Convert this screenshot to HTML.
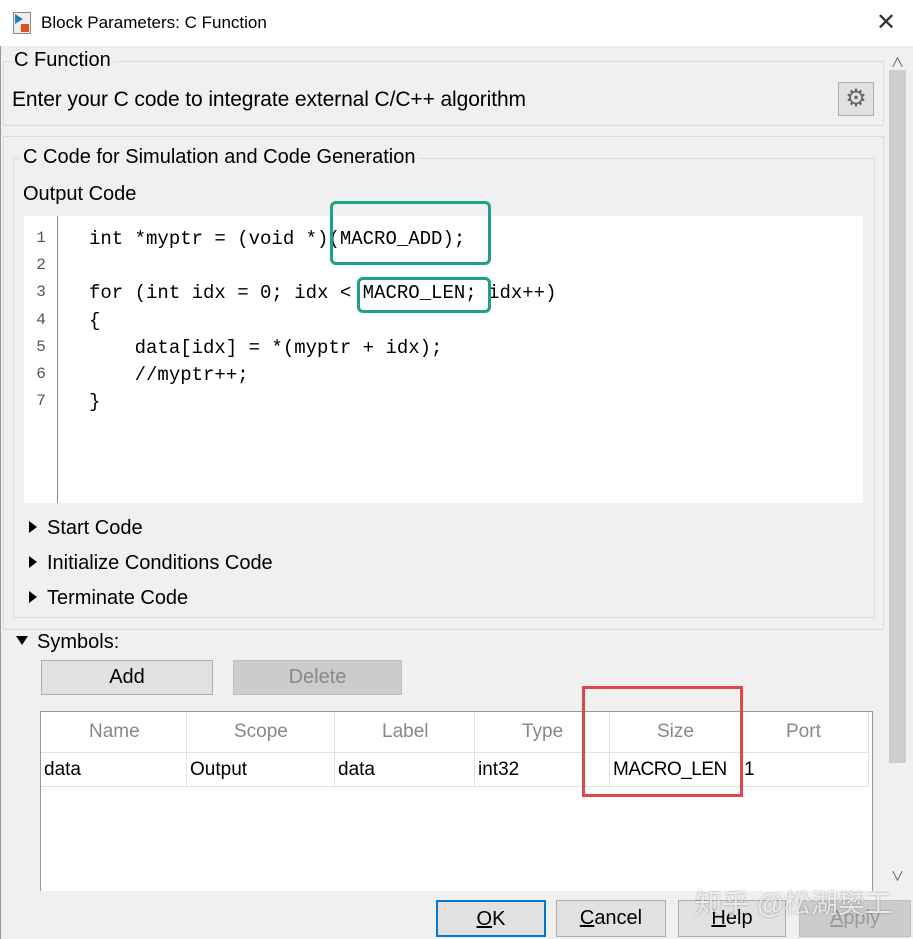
<!DOCTYPE html>
<html><head><meta charset="utf-8"><style>
*{margin:0;padding:0;box-sizing:border-box}
body{width:913px;height:939px;background:#f0f0f0;font-family:"Liberation Sans","Noto Sans CJK SC",sans-serif;position:relative;overflow:hidden;color:#000}
.a{position:absolute}
.t{font-size:20px;white-space:nowrap}
.mono{font-family:"Liberation Mono",monospace;font-size:19px;white-space:pre;position:absolute}
.ln{position:absolute;left:33px;width:16px;text-align:center;font-family:"Liberation Mono",monospace;font-size:16px;color:#555}
.btn{position:absolute;border:1px solid #adadad;background:#e1e1e1;font-size:19px;text-align:center}
.th{position:absolute;top:721px;font-size:19px;color:#888}
.td{position:absolute;top:759px;font-size:19px}
.vl{position:absolute;width:1px;background:#e2e2e2}
.tri{display:inline-block;width:0;height:0;border-left:8px solid #000;border-top:6px solid transparent;border-bottom:6px solid transparent;margin-right:10px;vertical-align:1px}
</style></head><body>
<div class="a" style="left:0;top:0;width:913px;height:46px;background:#fff"></div>
<div class="a" style="left:13px;top:12px;width:18px;height:22px;border:1px solid #888;background:#eee"></div>
<div class="a" style="left:15px;top:14px;width:0;height:0;border-left:8px solid #2a7ab8;border-top:5px solid transparent;border-bottom:5px solid transparent"></div>
<div class="a" style="left:21px;top:24px;width:8px;height:8px;background:#d9531e"></div>
<div class="a t" style="left:41px;top:13px;font-size:17px">Block Parameters: C Function</div>
<div class="a" style="left:876px;top:8px;font-size:24px;color:#333;font-weight:300">✕</div>
<div class="a" style="left:0;top:46px;width:1px;height:893px;background:#999"></div>
<div class="a" style="left:887px;top:48px;width:20px;height:840px;background:#f0f0f0"></div>
<div class="a" style="left:889px;top:70px;width:17px;height:693px;background:#cdcdcd"></div>
<div class="a" style="left:891px;top:52px;font-size:13px;color:#555">∧</div>
<div class="a" style="left:891px;top:866px;font-size:13px;color:#555">∨</div>
<div class="a" style="left:3px;top:61px;width:881px;height:65px;border:1px solid #dcdcdc"></div>
<div class="a t" style="left:11px;top:49px;background:#f0f0f0;padding:0 3px;">C Function</div>
<div class="a t" style="left:12px;top:88px;font-size:21px;letter-spacing:-0.1px">Enter your C code to integrate external C/C++ algorithm</div>
<div class="a" style="left:838px;top:82px;width:36px;height:34px;border:1px solid #adadad;background:#e1e1e1;text-align:center;font-size:24px;line-height:32px;color:#666">⚙</div>
<div class="a" style="left:3px;top:136px;width:881px;height:494px;border:1px solid #dcdcdc"></div>
<div class="a" style="left:13px;top:158px;width:862px;height:460px;border:1px solid #dcdcdc"></div>
<div class="a t" style="left:20px;top:146px;background:#f0f0f0;padding:0 3px">C Code for Simulation and Code Generation</div>
<div class="a t" style="left:23px;top:183px">Output Code</div>
<div class="a" style="left:24px;top:216px;width:839px;height:287px;background:#fff"></div>
<div class="a" style="left:57px;top:216px;width:1px;height:287px;background:#888"></div>
<div class="ln" style="top:229px">1</div><div class="ln" style="top:256px">2</div><div class="ln" style="top:283px">3</div><div class="ln" style="top:311px">4</div><div class="ln" style="top:338px">5</div><div class="ln" style="top:365px">6</div><div class="ln" style="top:392px">7</div>
<div class="mono" style="left:89px;top:228px">int *myptr = (void *)(MACRO_ADD);</div>
<div class="mono" style="left:89px;top:282px">for (int idx = 0; idx &lt; MACRO_LEN; idx++)</div>
<div class="mono" style="left:89px;top:310px">{</div>
<div class="mono" style="left:89px;top:337px">    data[idx] = *(myptr + idx);</div>
<div class="mono" style="left:89px;top:364px">    //myptr++;</div>
<div class="mono" style="left:89px;top:391px">}</div>
<div class="a" style="left:330px;top:201px;width:161px;height:64px;border:3px solid #1fa08a;border-radius:6px"></div>
<div class="a" style="left:357px;top:277px;width:134px;height:36px;border:3px solid #1fa08a;border-radius:6px"></div>
<div class="a t" style="left:29px;top:517px"><span class="tri"></span>Start Code</div>
<div class="a t" style="left:29px;top:552px"><span class="tri"></span>Initialize Conditions Code</div>
<div class="a t" style="left:29px;top:587px"><span class="tri"></span>Terminate Code</div>
<div class="a t" style="left:16px;top:631px"><span style="display:inline-block;width:0;height:0;border-top:9px solid #000;border-left:6px solid transparent;border-right:6px solid transparent;margin-right:9px;vertical-align:3px"></span>Symbols:</div>
<div class="btn" style="left:41px;top:660px;width:172px;height:35px;line-height:33px;font-size:20px">Add</div>
<div class="btn" style="left:233px;top:660px;width:169px;height:35px;line-height:33px;color:#888;background:#cccccc;border-color:#bfbfbf;font-size:20px">Delete</div>
<div class="a" style="left:40px;top:711px;width:833px;height:180px;background:#fff;border:1px solid #999;border-bottom:none"></div>
<div class="a" style="left:41px;top:752px;width:827px;height:1px;background:#e2e2e2"></div>
<div class="a" style="left:41px;top:786px;width:827px;height:1px;background:#e2e2e2"></div>
<div class="vl" style="left:186px;top:712px;height:75px"></div>
<div class="vl" style="left:334px;top:712px;height:75px"></div>
<div class="vl" style="left:474px;top:712px;height:75px"></div>
<div class="vl" style="left:609px;top:712px;height:75px"></div>
<div class="vl" style="left:741px;top:712px;height:75px"></div>
<div class="vl" style="left:868px;top:712px;height:75px"></div>
<div class="th" style="left:89px">Name</div><div class="th" style="left:234px">Scope</div><div class="th" style="left:382px">Label</div><div class="th" style="left:522px">Type</div><div class="th" style="left:657px">Size</div><div class="th" style="left:786px">Port</div>
<div class="td" style="left:44px">data</div><div class="td" style="left:190px">Output</div><div class="td" style="left:338px">data</div><div class="td" style="left:478px">int32</div><div class="td" style="left:613px;letter-spacing:-0.5px">MACRO_LEN</div><div class="td" style="left:744px">1</div>
<div class="a" style="left:582px;top:686px;width:161px;height:111px;border:3px solid #e0474c"></div>
<div class="btn" style="left:436px;top:900px;width:110px;height:37px;line-height:35px;border:2px solid #0078d7;font-size:20px"><u>O</u>K</div>
<div class="btn" style="left:556px;top:900px;width:110px;height:37px;line-height:35px;font-size:20px"><u>C</u>ancel</div>
<div class="btn" style="left:678px;top:900px;width:108px;height:37px;line-height:35px;font-size:20px"><u>H</u>elp</div>
<div class="btn" style="left:799px;top:900px;width:112px;height:37px;line-height:35px;color:#999;background:#cccccc;border-color:#bfbfbf;font-size:20px"><u>A</u>pply</div>
<div class="a" style="left:695px;top:882px;font-size:27px;color:rgba(255,255,255,0.75);white-space:nowrap;text-shadow:0 0 2px rgba(0,0,0,0.35)">知乎 @松湖樊工</div>
</body></html>
